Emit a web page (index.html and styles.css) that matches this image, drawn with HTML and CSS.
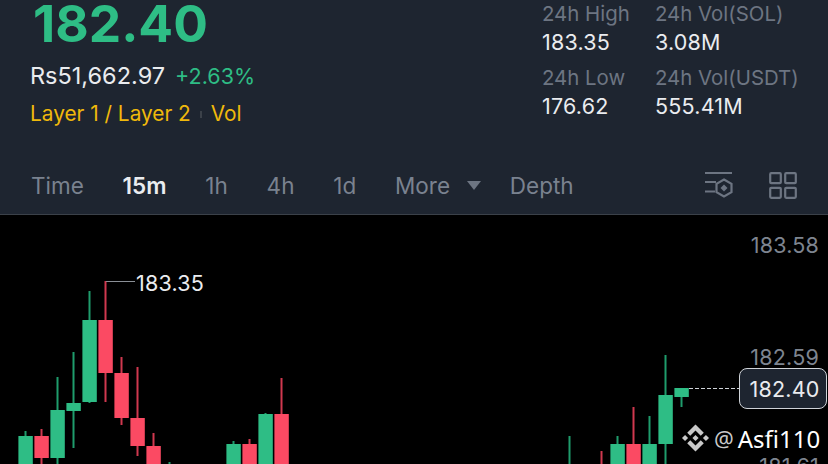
FILE: index.html
```html
<!DOCTYPE html>
<html lang="en">
<head>
<meta charset="utf-8">
<title>SOL/USDT</title>
<link rel="stylesheet" href="styles.css">
</head>
<body>
<div class="page">
  <header class="header">
    <div class="summary">
      <div class="price-block">
        <div class="price">182.40</div>
        <div class="sub"><span class="fiat">Rs51,662.97</span><span class="change">+2.63%</span></div>
        <div class="tags"><span>Layer 1 / Layer 2</span><i class="tag-sep"></i><span>Vol</span></div>
      </div>
      <div class="stats">
        <div class="stat"><div class="stat-label">24h High</div><div class="stat-value">183.35</div></div>
        <div class="stat"><div class="stat-label">24h Vol(SOL)</div><div class="stat-value">3.08M</div></div>
        <div class="stat"><div class="stat-label">24h Low</div><div class="stat-value">176.62</div></div>
        <div class="stat"><div class="stat-label">24h Vol(USDT)</div><div class="stat-value">555.41M</div></div>
      </div>
    </div>
    <nav class="tabs">
      <span class="tab">Time</span>
      <span class="tab active">15m</span>
      <span class="tab">1h</span>
      <span class="tab">4h</span>
      <span class="tab">1d</span>
      <span class="tab more">More<i class="caret"></i></span>
      <span class="tab">Depth</span>
      <span class="tools">
        <svg class="icon-settings" viewBox="0 0 30 28" width="30" height="28" aria-hidden="true">
          <path d="M1 2h27M1 11h11M1 20.500h10" class="icon-line"/>
          <path d="M20 8.500l7.500 4.300v8.400L20 25.500l-7.500-4.300v-8.400z" class="icon-line"/>
          <path d="M20 13.500l3.500 3.500-3.500 3.500-3.500-3.500z" class="icon-fill"/>
        </svg>
        <svg class="icon-grid" viewBox="0 0 28 27" width="28" height="27" aria-hidden="true">
          <rect x="1.200" y="1.200" width="10.600" height="10" rx="1" class="icon-line"/>
          <rect x="16.200" y="1.200" width="10.600" height="10" rx="1" class="icon-line"/>
          <rect x="1.200" y="15.800" width="10.600" height="10" rx="1" class="icon-line"/>
          <rect x="16.200" y="15.800" width="10.600" height="10" rx="1" class="icon-line"/>
        </svg>
      </span>
    </nav>
  </header>
  <main class="chart">
    <svg class="plot" viewBox="0 215 828 249" aria-hidden="true">
      <g class="wick-up">
        <path d="M25.500 431v33M57.500 377v87M73.500 352v96M89.500 291v112M169.500 462v2M233.500 441v4M265.500 413v2M569.500 436v28M617.500 436v9M649.500 416v29M665.500 355v109M681.500 397v10"/>
      </g>
      <g class="wick-down">
        <path d="M41.500 429v35M105.500 281v121M121.500 357v68M137.500 367v89M153.500 433v31M249.500 439v6M281.500 378v37M601.500 451v13M633.500 407v38"/>
      </g>
      <g class="body-up">
        <rect x="18.400" y="436" width="14.400" height="28"/>
        <rect x="50.400" y="410" width="14.400" height="48"/>
        <rect x="66.400" y="403" width="14.400" height="8"/>
        <rect x="82.400" y="320" width="14.400" height="82"/>
        <rect x="226.400" y="444" width="14.400" height="20"/>
        <rect x="258.400" y="414" width="14.400" height="50"/>
        <rect x="610.400" y="444" width="14.400" height="20"/>
        <rect x="642.400" y="444" width="14.400" height="20"/>
        <rect x="658.400" y="395" width="14.400" height="49"/>
        <rect x="674.400" y="388" width="14.400" height="9"/>
      </g>
      <g class="body-down">
        <rect x="34.400" y="436" width="14.400" height="22"/>
        <rect x="98.400" y="320" width="14.400" height="53"/>
        <rect x="114.400" y="373" width="14.400" height="45"/>
        <rect x="130.400" y="418" width="14.400" height="28"/>
        <rect x="146.400" y="446" width="14.400" height="18"/>
        <rect x="242.400" y="444" width="14.400" height="20"/>
        <rect x="274.400" y="414" width="14.400" height="50"/>
        <rect x="626.400" y="444" width="14.400" height="20"/>
      </g>
      <path class="leader" d="M106 281.500h29"/>
      <path class="last-line" d="M689 388.500h50"/>
    </svg>
    <span class="high-label">183.35</span>
    <span class="axis axis-top">183.58</span>
    <span class="axis axis-mid">182.59</span>
    <span class="axis axis-low">181.61</span>
    <span class="last-price">182.40</span>
    <div class="watermark">
      <svg class="logo" viewBox="0 0 126.610 126.610" width="27" height="28" aria-hidden="true">
        <polygon points="38.730 53.200 63.310 28.620 87.900 53.210 102.200 38.910 63.310 0 24.420 38.900"/>
        <polygon points="0 63.310 14.300 49.010 28.600 63.310 14.300 77.610"/>
        <polygon points="38.730 73.410 63.310 98 87.900 73.400 102.210 87.690 63.310 126.610 24.420 87.720"/>
        <polygon points="98 63.310 112.300 49 126.600 63.300 112.300 77.600"/>
        <polygon points="77.830 63.300 63.310 48.780 48.800 63.280 63.310 77.800"/>
      </svg>
      <span class="at">@</span><span class="handle">Asfi110</span>
    </div>
  </main>
</div>
</body>
</html>
```
FILE: styles.css
```css
* { box-sizing: border-box; }
html, body { margin: 0; padding: 0; background: #000; }
body { width: 828px; height: 464px; overflow: hidden; font-family: Inter, "Open Sans", sans-serif; }
.page { width: 828px; height: 464px; display: flex; flex-direction: column; overflow: hidden; }
.header { height: 215px; flex: none; background: #1e2530; border-bottom: 1px solid #3b4149; overflow: hidden; }
.summary { display: flex; justify-content: space-between; height: 155px; padding-left: 30px; padding-right: 30px; }
.price { margin-top: -9px; margin-left: 3px; font-size: 51.500px; line-height: 64px; font-weight: 700; color: #2ebd85; }
.sub { margin-top: 7px; display: flex; gap: 10px; align-items: baseline; line-height: 28px; }
.fiat { font-size: 23.500px; color: #eaecef; }
.change { font-size: 21.500px; color: #2ebd85; }
.tags { margin-top: 10px; display: flex; align-items: center; font-size: 20.800px; line-height: 28px; color: #f0b90b; }
.tag-sep { width: 2px; height: 7px; margin: 0 9px; background: #3b4149; }
.stats { display: grid; grid-template-columns: 113px auto; grid-auto-rows: 64px; width: 256px; }
.stat-label { font-size: 20.400px; line-height: 28px; color: #6d7582; white-space: nowrap; }
.stat-value { font-size: 21.500px; letter-spacing: 0.200px; line-height: 28px; color: #eaecef; }
.tabs { display: flex; align-items: center; gap: 38.800px; height: 60px; padding-left: 31px; padding-right: 31px; font-size: 22.500px; color: #7a828f; }
.tab.active { color: #eaecef; font-weight: 600; }
.more { display: flex; align-items: center; }
.caret { width: 0; height: 0; margin-left: 17px; margin-right: -10px; border-left: 7.500px solid transparent; border-right: 7.500px solid transparent; border-top: 9px solid #6d7582; }
.tools { margin-left: auto; display: flex; align-items: center; gap: 35px; }
.icon-line { fill: none; stroke: #6d7582; stroke-width: 2.200; }
.icon-fill { fill: #6d7582; }
.chart { position: relative; flex: 1; background: #000; overflow: hidden; }
.plot { display: block; width: 828px; height: 249px; }
.body-up { fill: #2ebd85; }
.body-down { fill: #fb4a63; }
.wick-up path { fill: none; stroke: #1f9c6c; stroke-width: 2; }
.wick-down path { fill: none; stroke: #d0384f; stroke-width: 2; }
.leader { stroke: #8a8f96; stroke-width: 1; fill: none; }
.last-line { stroke: #cfd3d8; stroke-width: 1; stroke-dasharray: 4 2; fill: none; }
.high-label { position: absolute; left: 136px; top: 55px; font-size: 21.500px; letter-spacing: 0.200px; line-height: 26px; color: #eaecef; }
.axis { position: absolute; right: 9px; font-size: 21.500px; letter-spacing: 0.200px; line-height: 26px; color: #7e8590; }
.axis-top { top: 17px; }
.axis-mid { top: 129px; }
.axis-low { top: 238px; }
.last-price { position: absolute; left: 739px; top: 153px; width: 88px; height: 41px; padding-left: 3px; display: flex; align-items: center; justify-content: center; font-size: 21.500px; letter-spacing: 0.200px; color: #eaecef; background: #1e2530; border: 1px solid #cfd3d8; border-radius: 8px; }
.watermark { position: absolute; left: 682px; top: 209px; display: flex; align-items: center; height: 28px; }
.logo { fill: #c9c9c9; }
.at { margin-left: 5px; font-family: "Noto Sans", sans-serif; font-size: 22px; color: #c9c9c9; }
.handle { margin-left: 4px; font-family: "Noto Sans", sans-serif; font-size: 24px; color: #fff; }
```
